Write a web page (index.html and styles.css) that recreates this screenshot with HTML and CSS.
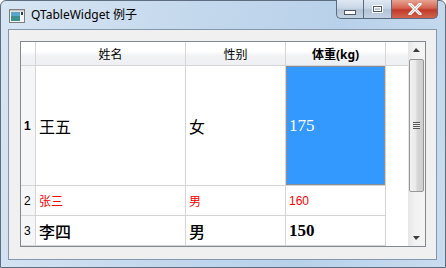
FILE: index.html
```html
<!DOCTYPE html>
<html lang="zh">

<head>
    <meta charset="UTF-8">
    <meta name="viewport" content="width=device-width, initial-scale=1.0">
    <title>QTableWidget 例子</title>
    <link rel="stylesheet" href="styles.css">
</head>

<body>
    <div class="window">
        <div class="titlebar">
            <svg class="app-icon" width="16" height="16" viewBox="0 0 16 16">
                <rect x="0.5" y="1.5" width="15" height="13" fill="#f4f4f4" stroke="#7d7d7d"/>
                <rect x="2" y="4" width="9" height="9" fill="#3f8f8c"/>
                <rect x="2" y="4" width="9" height="4" fill="#5aa6c9"/>
                <rect x="12" y="4" width="2" height="3" fill="#3a3a3a"/>
                <rect x="1" y="2" width="14" height="1.5" fill="#c9c9c9"/>
            </svg>
            <span class="title">QTableWidget 例子</span>
            <div class="controls">
                <div class="btn min"><span class="min-glyph"></span></div>
                <div class="btn max"><span class="max-glyph"></span></div>
                <div class="btn close">
                    <svg width="16" height="12" viewBox="0 0 16 12">
                        <path d="M3 1 L13 11 M13 1 L3 11" stroke="#ffffff" stroke-width="3" stroke-linecap="square"/>
                        <path d="M3 1 L13 11 M13 1 L3 11" stroke="#6b6b6b" stroke-width="1" opacity="0.35"/>
                    </svg>
                </div>
            </div>
        </div>

        <div class="client">
            <div class="table-widget">
                <div class="view">
                    <div class="corner"></div>
                    <div class="hhead">姓名</div>
                    <div class="hhead">性别</div>
                    <div class="hhead bold">体重(kg)</div>
                    <div class="hhead rest"></div>

                    <div class="vhead bold tall">1</div>
                    <div class="cell tall big">王五</div>
                    <div class="cell tall big">女</div>
                    <div class="cell tall selected"><span class="focus">175</span></div>
                    <div class="blank tall"></div>

                    <div class="vhead row">2</div>
                    <div class="cell row small red">张三</div>
                    <div class="cell row small red">男</div>
                    <div class="cell row small red num">160</div>
                    <div class="blank row"></div>

                    <div class="vhead row">3</div>
                    <div class="cell row big medium">李四</div>
                    <div class="cell row big medium">男</div>
                    <div class="cell row serif bold">150</div>
                    <div class="blank row"></div>
                </div>
                <div class="vscroll">
                    <div class="arrow up"></div>
                    <div class="thumb"><span class="grip"></span></div>
                    <div class="track"></div>
                    <div class="arrow down"></div>
                </div>
            </div>
        </div>
    </div>
</body>

</html>
```

FILE: styles.css
```css
body {
    margin: 0;
    background-color: #ffffff;
    font-family: "Noto Sans", "Noto Sans CJK SC", sans-serif;
}

.window {
    width: 446px;
    height: 268px;
    box-sizing: border-box;
    display: flex;
    flex-direction: column;
    background: linear-gradient(100deg, #d7e5f3 0%, #c2d7ec 45%, #b8d1ea 70%, #c9dcef 100%);
    border: 1px solid #5e6d80;
    border-radius: 6px 6px 0 0;
}

.titlebar {
    height: 29px;
    display: flex;
    align-items: flex-start;
    position: relative;
}

.app-icon {
    margin: 7px 0 0 8px;
}

.title {
    margin: 6px 0 0 6px;
    font-size: 12px;
    line-height: 16px;
    color: #000000;
}

.controls {
    position: absolute;
    top: -1px;
    right: 7px;
    display: flex;
}

.btn {
    height: 19px;
    box-sizing: border-box;
    border: 1px solid #5a6a80;
    border-top: none;
    display: flex;
    align-items: center;
    justify-content: center;
    background: linear-gradient(#dfe8f2 0%, #c9d7e6 45%, #b3c3d6 55%, #c3d2e3 100%);
}

.btn.min {
    width: 27px;
    border-right: none;
    border-radius: 0 0 0 5px;
}

.btn.max {
    width: 28px;
    border-right: none;
}

.btn.close {
    width: 47px;
    border-radius: 0 0 5px 0;
    background: linear-gradient(#e8a493 0%, #d4634f 45%, #c0392b 55%, #d1654f 100%);
}

.min-glyph {
    width: 10px;
    height: 3px;
    margin-top: 6px;
    background: #ffffff;
    border: 1px solid #4e5866;
}

.max-glyph {
    width: 7px;
    height: 4px;
    border: 1px solid #4e5866;
    box-shadow: inset 0 0 0 1px #ffffff, 0 0 0 1px #ffffff;
}

.client {
    flex: 1;
    margin: 0 8px 7px 7px;
    padding: 11px 10px 12px 11px;
    background-color: #f0f0f0;
    border: 1px solid #8597ad;
    display: flex;
}

.table-widget {
    flex: 1;
    display: flex;
    border: 1px solid #828790;
    background-color: #ffffff;
    overflow: hidden;
}

.view {
    flex: 1;
    display: grid;
    grid-template-columns: 15px 150px 100px 100px 1fr;
    grid-template-rows: 24px 120px 30px 30px;
    align-content: start;
}

.corner,
.hhead {
    background: linear-gradient(#ffffff 0%, #ffffff 40%, #f1f2f4 60%, #eef0f3 100%);
    border-right: 1px solid #d5d5d5;
    border-bottom: 1px solid #d5d5d5;
    box-sizing: border-box;
}

.hhead {
    display: flex;
    align-items: center;
    justify-content: center;
    font-size: 12px;
    color: #000000;
}

.hhead.rest {
    border-right: none;
}

.vhead {
    background-color: #f5f6f8;
    border-right: 1px solid #d5d5d5;
    border-bottom: 1px solid #d5d5d5;
    box-sizing: border-box;
    display: flex;
    align-items: center;
    padding-left: 3px;
    font-size: 12px;
    font-family: "Liberation Sans", sans-serif;
}

.cell {
    border-right: 1px solid #d5d5d5;
    border-bottom: 1px solid #d5d5d5;
    box-sizing: border-box;
    display: flex;
    align-items: center;
    padding-left: 3px;
    color: #000000;
}

.blank {
    background-color: #ffffff;
}

.bold {
    font-weight: bold;
}

.medium {
    font-weight: 500;
}

.big {
    font-size: 16px;
}

.small {
    font-size: 12px;
}

.red {
    color: #ff0000;
}

.num {
    font-family: "Liberation Sans", sans-serif;
}

.serif {
    font-family: "Liberation Serif", serif;
    font-size: 17px;
}

.cell.selected {
    padding: 0;
    border-right: 1px solid #d5d5d5;
}

.focus {
    flex: 1;
    align-self: stretch;
    display: flex;
    align-items: center;
    padding-left: 2px;
    background-color: #3399ff;
    border: 1px dotted #d9822b;
    color: #ffffff;
    font-family: "Liberation Serif", serif;
    font-size: 17px;
}

.vscroll {
    width: 17px;
    display: flex;
    flex-direction: column;
    background: linear-gradient(90deg, #e6e6e6, #f2f2f2 40%, #f4f4f4);
}

.arrow {
    height: 17px;
    position: relative;
}

.arrow::after {
    content: "";
    position: absolute;
    left: 5px;
    width: 0;
    height: 0;
    border-left: 3px solid transparent;
    border-right: 4px solid transparent;
}

.arrow.up::after {
    top: 6px;
    border-bottom: 4px solid #3c3c3c;
}

.arrow.down::after {
    top: 7px;
    border-top: 4px solid #3c3c3c;
}

.thumb {
    height: 133px;
    margin: 0 1px;
    box-sizing: border-box;
    border: 1px solid #979797;
    border-radius: 2px;
    background: linear-gradient(90deg, #f2f2f2 0%, #e9e9e9 45%, #d6d6d6 55%, #cfcfcf 100%);
    display: flex;
    align-items: center;
    justify-content: center;
}

.grip {
    width: 7px;
    height: 7px;
    background: repeating-linear-gradient(#555555 0, #555555 1px, #eeeeee 1px, #eeeeee 2px);
}

.track {
    flex: 1;
}
```
